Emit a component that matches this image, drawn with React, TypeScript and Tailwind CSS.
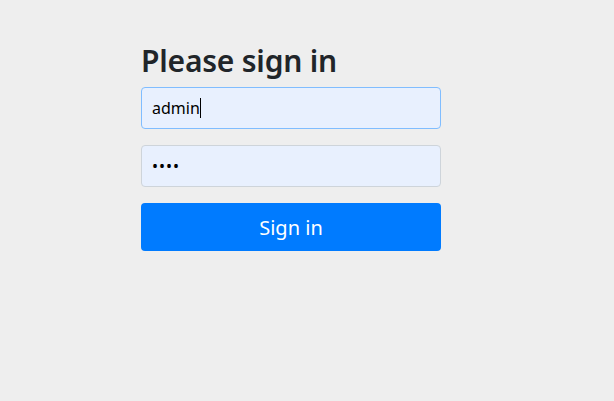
import React from 'react';

const App: React.FC = () => {
    return (
        <div className="min-h-screen w-full bg-[#eeeeee] font-['Noto_Sans','Open_Sans',sans-serif]">
            <form className="w-[300px] ml-[141px] pt-[43px] flex flex-col" onSubmit={(e) => e.preventDefault()}>
                <h2 className="text-[30px] leading-[1.2] font-semibold text-[#212529] mb-[8px] tracking-[-0.2px]">Please sign in</h2>

                {/* username - focused, caret drawn after text */}
                <div className="h-[42px] flex items-center px-[10px] bg-[#e8f0fe] border border-[#80bdff] rounded-[4px] text-[16px] text-black">
                    <span>admin</span>
                    <span className="w-px h-[20px] bg-black" />
                </div>

                <div className="h-[42px] mt-[16px] flex items-center px-[10px] bg-[#e8f0fe] border border-[#ced4da] rounded-[4px] text-[16px] text-black tracking-[1px]">
                    <span>••••</span>
                </div>

                <button type="submit" className="h-[48px] mt-[16px] pt-[2px] bg-[#007bff] rounded-[4px] text-white text-[20px]">
                    Sign in
                </button>
            </form>
        </div>
    );
};

export default App;
